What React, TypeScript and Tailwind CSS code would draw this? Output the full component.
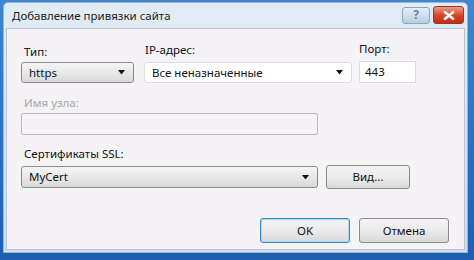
import React from 'react';

const font = { fontFamily: '"Noto Sans", "Open Sans", sans-serif' };

const Arrow: React.FC = () => (
  <svg width="8" height="5" viewBox="0 0 8 5" className="shrink-0">
    <path d="M0 0h7L3.5 4.5z" fill="#111" />
  </svg>
);

const Combo: React.FC<{ value: string; className?: string; flat?: boolean }> = ({
  value,
  className = '',
  flat,
}) => (
  <div
    className={`flex items-center justify-between pl-[7px] pr-[7px] rounded-[3px] border text-[11.5px] text-[#111] ${
      flat
        ? 'bg-white border-[#dcdde0]'
        : 'bg-gradient-to-b from-[#f6f6f6] to-[#dadada] border-[#8a8a8a]'
    } ${className}`}
  >
    <span>{value}</span>
    <Arrow />
  </div>
);

const Button: React.FC<{ label: string; className?: string; focused?: boolean }> = ({
  label,
  className = '',
  focused,
}) => (
  <div
    className={`flex items-center justify-center rounded-[3px] border text-[11.5px] text-[#111] bg-gradient-to-b from-[#f4f4f4] via-[#ebebeb] to-[#d9d9d9] ${
      focused ? 'border-[#3c8ac4] shadow-[inset_0_0_0_1px_#a8d8f0]' : 'border-[#8a8a8a]'
    } ${className}`}
  >
    {label}
  </div>
);

const App: React.FC = () => {
  return (
    <div className="w-[474px] h-[260px] bg-gradient-to-b from-[#3f86d0] to-[#1d5fae] pt-[2px] pl-[3px] pr-[6px] pb-[7px]" style={font}>
      <div className="h-full flex flex-col rounded-t-[5px] bg-gradient-to-b from-[#e2ecf6] to-[#cfdeec] border border-[#9bb6d2] px-[2px] pb-[2px]">
        <div className="h-[25px] flex items-center justify-between pl-[6px] pr-[1px] shrink-0">
          <span className="text-[11.5px] text-[#1b1b1b]">Добавление привязки сайта</span>
          <div className="flex gap-[3px] items-center pb-[1px]">
            <div className="w-[28px] h-[17px] rounded-[3px] border border-[#8ea6c2] bg-gradient-to-b from-[#e6eef7] to-[#b9cde2] flex items-center justify-center text-[12px] font-bold text-[#6a84a0] leading-none">
              ?
            </div>
            <div className="w-[31px] h-[18px] rounded-[3px] border border-[#8e3a30] bg-gradient-to-b from-[#eb9a86] via-[#d9462c] to-[#c42a12] flex items-center justify-center">
              <svg width="12" height="9" viewBox="0 0 12 9">
                <path d="M2 1.2l8 6.6M10 1.2l-8 6.6" stroke="#fff" strokeWidth="2.6" strokeLinecap="round" />
              </svg>
            </div>
          </div>
        </div>
        <div className="flex-1 bg-[#f5f3f6] border border-[#b8c4d2] pl-[14px] pt-[13px] text-[11.5px] text-[#111]">
          <div className="flex items-end">
            <div className="flex flex-col w-[113px]">
              <span className="pl-[3px] h-[18px] leading-[18px] mb-[1px]">Тип:</span>
              <Combo value="https" className="h-[21px] pl-[4px]" />
            </div>
            <div className="flex flex-col w-[208px] ml-[10px]">
              <span className="pl-[1px] h-[18px] leading-[14px] mb-[1px]">IP-адрес:</span>
              <Combo value="Все неназначенные" flat className="h-[21px] pl-[3px]" />
            </div>
            <div className="flex flex-col w-[57px] ml-[7px]">
              <span className="h-[18px] leading-[14px] mb-[1px]">Порт:</span>
              <div className="h-[22px] bg-white border border-[#dcdde0] flex items-center pl-[5px]">443</div>
            </div>
          </div>
          <div className="flex flex-col mt-[10px] w-[297px]">
            <span className="pl-[3px] h-[19px] leading-[19px] text-[#a8a8a8] mb-[1px]">Имя узла:</span>
            <div className="h-[22px] rounded-[2px] border border-[#b6b8bc] bg-[#f5f3f6]" />
          </div>
          <div className="flex flex-col mt-[9px]">
            <span className="pl-[3px] h-[19px] leading-[19px] mb-[2px]">Сертификаты SSL:</span>
            <div className="flex items-center">
              <Combo value="MyCert" className="h-[22px] w-[297px] pl-[6px]" />
              <Button label="Вид..." className="w-[84px] h-[24px] ml-[8px]" />
            </div>
          </div>
          <div className="flex justify-end gap-[9px] mt-[29px] pr-[15px]">
            <Button label="OK" focused className="w-[90px] h-[25px]" />
            <Button label="Отмена" className="w-[90px] h-[25px]" />
          </div>
        </div>
      </div>
    </div>
  );
};

export default App;
